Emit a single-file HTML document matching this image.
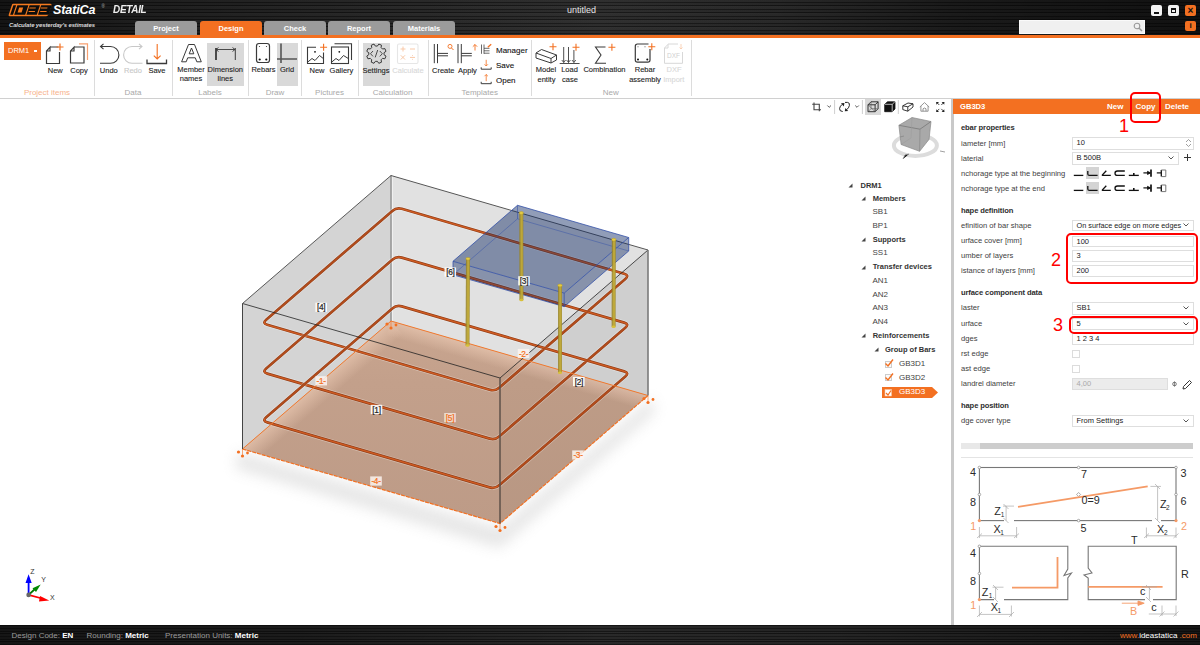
<!DOCTYPE html>
<html><head><meta charset="utf-8">
<style>
*{margin:0;padding:0;box-sizing:border-box}
html,body{width:1200px;height:645px;overflow:hidden;background:#fff;font-family:"Liberation Sans",sans-serif;}
.a{position:absolute}
#hdr{left:0;top:0;width:1200px;height:35px;background:#222;background-image:linear-gradient(90deg,rgba(0,0,0,0.55) 0%,rgba(0,0,0,0.3) 12%,rgba(0,0,0,0.05) 35%,rgba(255,255,255,0.02) 50%,rgba(0,0,0,0.08) 65%,rgba(0,0,0,0.4) 80%,rgba(0,0,0,0.6) 100%),repeating-linear-gradient(180deg,#2c2c2c 0px,#2b2b2b 2px,#181818 2px,#181818 3px,#292929 3px,#2a2a2a 5px,#151515 5px,#151515 6px,#2e2e2e 6px,#2d2d2d 7px);}
#oline{left:0;top:35px;width:1200px;height:3px;background:#f37021}
#tb{left:0;top:38px;width:1200px;height:61px;background:#fff;border-bottom:1px solid #d0d0d0}
.tab{top:21px;height:14px;width:62px;background:#9b9b9b;border-radius:3px 3px 0 0;color:#fff;font-weight:bold;font-size:7.5px;text-align:center;line-height:15px}
.tab.on{background:#f37021}
.sep{top:40px;width:1px;height:56px;background:#dcdcdc}
.glbl{top:87.5px;font-size:8px;color:#a9a9a9;text-align:center;line-height:10px}
.lbl{font-size:8px;color:#111;text-align:center;line-height:9px;white-space:nowrap;-webkit-text-stroke:0.1px currentColor}
.hl{background:#d9d9d9}
#foot{left:0;top:625px;width:1200px;height:20px;background:#222;background-image:linear-gradient(90deg,rgba(0,0,0,0.5) 0%,rgba(0,0,0,0.35) 25%,rgba(0,0,0,0.05) 50%,rgba(0,0,0,0.15) 70%,rgba(0,0,0,0.5) 100%),repeating-linear-gradient(180deg,#161616 0px,#161616 1px,#2c2c2c 1px,#2b2b2b 3px,#1a1a1a 3px,#1a1a1a 4px,#2a2a2a 4px,#2a2a2a 6px,#171717 6px,#171717 7px,#2e2e2e 7px,#2d2d2d 8px);}
.ft{top:631px;font-size:8px;color:#9a9a9a;line-height:10px;white-space:nowrap}
.ft b{color:#fff}
#panel{left:953px;top:99px;width:247px;height:525px;background:#fff}
.ph{font-size:7.6px;letter-spacing:-0.12px;color:#2e2e2e;font-weight:bold;line-height:10px;white-space:nowrap}
.pl{font-size:7.6px;color:#3e3e3e;line-height:10px;white-space:nowrap;left:961px}
.inp{left:1072px;width:122px;height:12px;border:1px solid #dedede;background:#fff;font-size:7.5px;color:#111;line-height:10px;padding-left:3.5px}
.tr{font-size:8px;color:#444;line-height:10px;white-space:nowrap}
.tr.b{font-weight:bold;color:#333;font-size:7.5px}
.red{border:2.3px solid #f00;border-radius:5px}
.rn{color:#f00;font-size:18px;line-height:18px}
</style></head><body>
<div id="hdr" class="a"></div>
<div id="oline" class="a"></div>
<!-- LOGO -->
<svg class="a" style="left:8px;top:3px" width="46" height="14" viewBox="0 0 46 14"><path d="M5.2 0.8 L42.3 0.8 Q44 0.8 43.5 2.3 L40.3 11.8 Q39.8 13.2 38.3 13.2 L1.7 13.2 Q0.2 13.2 0.7 11.7 L3.8 2.2 Q4.2 0.8 5.2 0.8Z" fill="#f47a1f"/><path d="M5.37 2.2 L8.17 2.2 L5.00 11.8 L2.20 11.8Z" fill="#0c0c0c"/><path d="M9.37 2.2 L20.37 2.2 L17.20 11.8 L6.20 11.8Z" fill="#0c0c0c"/><path d="M11.18 4.6 L15.18 4.6 L13.60 9.4 L9.60 9.4Z" fill="#f47a1f"/><path d="M21.57 2.2 L31.97 2.2 L28.80 11.8 L18.40 11.8Z" fill="#0c0c0c"/><path d="M21.53 4.4 L27.93 4.4 L27.60 5.4 L21.20 5.4Z M20.83 8.0 L27.13 8.0 L26.80 9.0 L20.50 9.0Z" fill="#f47a1f"/><path d="M33.17 2.2 L43.77 2.2 L40.60 11.8 L30.00 11.8Z" fill="#0c0c0c"/><path d="M32.93 4.4 L39.53 4.4 L39.20 5.4 L32.60 5.4Z M32.33 8.0 L38.73 8.0 L38.40 9.0 L32.00 9.0Z" fill="#f47a1f"/></svg>
<div class="a" style="left:53px;top:2px;font-size:12.5px;font-style:italic;font-weight:bold;color:#fff;line-height:16px;letter-spacing:-0.1px">StatiCa</div>
<div class="a" style="left:101.5px;top:3.5px;font-size:4.5px;color:#bbb;line-height:6px">&#174;</div>
<div class="a" style="left:113px;top:3px;font-size:11px;font-style:italic;font-weight:bold;color:#eee;line-height:13px;letter-spacing:-0.3px;transform:scaleX(0.9);transform-origin:0 0">DETAIL</div>
<div class="a" style="left:9px;top:20.5px;font-size:6px;font-style:italic;font-weight:bold;color:#d8d8d8;line-height:8px;letter-spacing:-0.15px">Calculate yesterday's estimates</div>
<div class="a" style="left:567px;top:5px;font-size:9px;color:#e8e8e8;line-height:11px">untitled</div>
<div class="a tab" style="left:135px">Project</div>
<div class="a tab on" style="left:200px">Design</div>
<div class="a tab" style="left:264px">Check</div>
<div class="a tab" style="left:328px">Report</div>
<div class="a tab" style="left:393px">Materials</div>
<div class="a" style="left:1151px;top:5px;width:11px;height:11px;background:#f2f2f2;border-radius:2px"><div class="a" style="left:3px;top:7px;width:5px;height:1.5px;background:#111"></div></div>
<div class="a" style="left:1168px;top:5px;width:11px;height:11px;background:#f2f2f2;border-radius:2px"><div class="a" style="left:3px;top:3px;width:5px;height:5px;border:1px solid #111;border-top-width:2px"></div></div>
<div class="a" style="left:1185px;top:5px;width:11px;height:11px;background:#f37021;border-radius:2px;color:#111;font-size:10px;line-height:11px;text-align:center;font-weight:bold">&#215;</div>
<div class="a" style="left:1185px;top:21px;width:11px;height:10px;background:#f37021;border-radius:2px;color:#111;font-size:8px;line-height:10px;text-align:center;font-weight:bold">i</div>
<div class="a" style="left:1019px;top:20px;width:126px;height:14px;background:#f0f0f0;border:1px solid #fafafa"></div>
<svg class="a" style="left:1133px;top:22px" width="10" height="10" viewBox="0 0 10 10"><circle cx="4" cy="4" r="2.8" fill="none" stroke="#999" stroke-width="1.1"/><path d="M6 6 L9 9" stroke="#999" stroke-width="1.5"/></svg>

<div id="tb" class="a"></div>
<div class="a hl" style="left:207px;top:42.5px;width:37px;height:43px"></div>
<div class="a hl" style="left:276.5px;top:42.5px;width:21px;height:43px"></div>
<div class="a hl" style="left:363px;top:43px;width:26.5px;height:42.5px"></div>
<div class="a sep" style="left:93.5px"></div>
<div class="a sep" style="left:171.5px"></div>
<div class="a sep" style="left:247.5px"></div>
<div class="a sep" style="left:301px"></div>
<div class="a sep" style="left:357.5px"></div>
<div class="a sep" style="left:427.5px"></div>
<div class="a sep" style="left:531px"></div>
<div class="a sep" style="left:690.5px"></div>
<div class="a" style="left:4px;top:42px;width:37px;height:18px;background:#f37021;color:#fff;font-size:7.5px;line-height:18px;padding-left:4px">DRM1</div>
<div class="a" style="left:34px;top:50px;width:3px;height:1.5px;background:#fff"></div>
<svg class="a" style="left:0;top:0" width="700" height="98" viewBox="0 0 700 98" fill="none" stroke-linecap="butt">
<path d="M50 47 L58.5 47 M59.5 52 L59.5 63.5 L46.5 63.5 L46.5 51 L50 47.2 L50 51 L46.5 51" stroke="#3a3a3a" stroke-width="1.2"/>
<path d="M60 43.5 V50.5 M56.5 47 H63.5" stroke="#f37021" stroke-width="1.2"/>
<path d="M74 47 L84 47 L84 63 L70.5 63 L70.5 51 L74 47.2 L74 51 L70.5 51" stroke="#3a3a3a" stroke-width="1.2"/>
<path d="M79 43.8 L87.5 43.8 L87.5 60" stroke="#f7a070" stroke-width="1.2"/>
<path d="M100.5 46.5 L110.5 46.5 A8.4 8.4 0 0 1 110.5 63.3 L100 63.3 M103.5 43.8 L100.5 46.5 L103.5 49.2" stroke="#3a3a3a" stroke-width="1.1"/>
<path d="M142 46.5 L132 46.5 A8.4 8.4 0 0 0 132 63.3 L142.5 63.3 M139 43.8 L142 46.5 L139 49.2" stroke="#c8c8c8" stroke-width="1.1"/>
<path d="M157.2 44 V59 M153.8 55.6 L157.2 59 L160.6 55.6" stroke="#f37021" stroke-width="1.1"/>
<path d="M147 59.5 V63.5 H166.5 V59.5" stroke="#3a3a3a" stroke-width="1.3"/>
<path d="M188.5 44.5 L194.5 44.5 L201.3 61.8 L196.8 61.8 L195.3 57.8 L187.7 57.8 L186.2 61.8 L181.6 61.8Z M189.2 53.8 L193.8 53.8 L191.5 48Z" stroke="#3a3a3a" stroke-width="1"/>
<path d="M216 49.5 H235 M218.5 47.5 L216 49.5 L218.5 51.5 M232.5 47.5 L235 49.5 L232.5 51.5" stroke="#3a3a3a" stroke-width="0.9"/>
<path d="M216 48 V60" stroke="#3a3a3a" stroke-width="1.8"/><path d="M235.3 48 V60" stroke="#3a3a3a" stroke-width="1"/>
<rect x="256.5" y="43.5" width="13" height="19" rx="2.5" stroke="#3a3a3a" stroke-width="1.2"/>
<circle cx="259.5" cy="46.5" r="0.6" fill="#3a3a3a" stroke="none"/><circle cx="266.5" cy="46.5" r="0.6" fill="#3a3a3a" stroke="none"/><circle cx="259.7" cy="59.5" r="1.1" fill="#111" stroke="none"/><circle cx="266.3" cy="59.5" r="1.1" fill="#111" stroke="none"/>
<path d="M281 43.5 V63 M277 59 H297" stroke="#555" stroke-width="1.6"/>
<path d="M316 47.2 H307.5 V63.5 H323.5 V52.5" stroke="#3a3a3a" stroke-width="1.1"/>
<path d="M307.8 62 L312 58.5 L315 60.5 L319.5 55.5 L323.3 58.5" stroke="#3a3a3a" stroke-width="1"/><circle cx="315" cy="51.8" r="0.9" fill="#111" stroke="none"/>
<path d="M323.6 43.7 V50.7 M320.1 47.2 H327.1" stroke="#f37021" stroke-width="1.1"/>
<rect x="331.5" y="47" width="17" height="16.5" stroke="#3a3a3a" stroke-width="1.1"/><path d="M334.5 43.8 H351.5 V60" stroke="#3a3a3a" stroke-width="1.1"/>
<path d="M331.8 62 L336 58.5 L339 60.5 L343.5 55.5 L348.3 58.5" stroke="#3a3a3a" stroke-width="1"/><circle cx="339.3" cy="51.8" r="0.9" fill="#111" stroke="none"/>
<path d="M384.03 54.71 L386.01 56.10 L384.89 58.80 L382.51 58.39 L381.09 59.81 L381.50 62.19 L378.80 63.31 L377.41 61.33 L375.39 61.33 L374.00 63.31 L371.30 62.19 L371.71 59.81 L370.29 58.39 L367.91 58.80 L366.79 56.10 L368.77 54.71 L368.77 52.69 L366.79 51.30 L367.91 48.60 L370.29 49.01 L371.71 47.59 L371.30 45.21 L374.00 44.09 L375.39 46.07 L377.41 46.07 L378.80 44.09 L381.50 45.21 L381.09 47.59 L382.51 49.01 L384.89 48.60 L386.01 51.30 L384.03 52.69Z" stroke="#3a3a3a" stroke-width="1" stroke-linejoin="round"/>
<path d="M373 51 L370.5 53.7 L373 56.4 M379.8 51 L382.3 53.7 L379.8 56.4 M377.7 50 L375.2 57.4" stroke="#3a3a3a" stroke-width="0.9"/>
<rect x="397.5" y="44" width="20.5" height="19.5" rx="1.5" stroke="#e6e6e6" stroke-width="1.1"/>
<path d="M403 46.5 V51.5 M400.5 49 H405.5 M410 49 H415 M400.8 55.3 L405 59.5 M405 55.3 L400.8 59.5 M410 57.4 H415" stroke="#f9c9a8" stroke-width="1"/><circle cx="412.5" cy="55.5" r="0.5" fill="#f9c9a8"/><circle cx="412.5" cy="59.3" r="0.5" fill="#f9c9a8"/>
<path d="M434.3 44 V63.2 M437.5 44 V63.2 M437.5 53.4 H448 M437.5 55.8 H448" stroke="#3a3a3a" stroke-width="1"/>
<circle cx="450" cy="46.4" r="2" stroke="#f37021" stroke-width="0.9"/><path d="M451.5 48 L453.5 50" stroke="#f37021" stroke-width="1"/>
<path d="M458 44 V63.2 M461.3 44 V63.2 M461.3 53.4 H471.8 M461.3 55.8 H471.8" stroke="#3a3a3a" stroke-width="1"/>
<path d="M475 50.5 V44.5 M472.8 46.7 L475 44.5 L477.2 46.7" stroke="#f37021" stroke-width="0.9"/>
<path d="M481.5 44.5 V53.8 M484 44.5 V53.8 M484 48.3 H489.5 M484 50.8 H489.5 M484 53.2 H489.5" stroke="#3a3a3a" stroke-width="0.75"/><path d="M487.8 47.3 L491.2 44.2" stroke="#f37021" stroke-width="1.3"/>
<path d="M486.2 59.8 V66 M484.5 64.3 L486.2 66 L487.9 64.3" stroke="#f37021" stroke-width="0.8"/><path d="M481.2 67.3 V69.2 H491.2 V67.3" stroke="#3a3a3a" stroke-width="1"/>
<path d="M486.2 81.2 V74.5 M484.5 76.2 L486.2 74.5 L487.9 76.2" stroke="#f37021" stroke-width="0.8"/><path d="M481.2 81.8 V83.7 H491.2 V81.8" stroke="#3a3a3a" stroke-width="1"/>
<path d="M536 53 L541.5 49.5 L556.5 55 L551 58.5 Z M536 53 V58 L551 63 V58.5 M556.5 55 V60 L551 63" stroke="#3a3a3a" stroke-width="1"/>
<path d="M553 43.3 V50.3 M549.5 46.8 H556.5" stroke="#f37021" stroke-width="1.1"/>
<path d="M563.7 47 V62.5 M568.5 47 V62.5 M573.9 50 V62.5 M559.7 63.5 H579.6" stroke="#3a3a3a" stroke-width="0.9"/>
<path d="M561.8 60 L563.7 62.5 L565.6 60 M566.6 60 L568.5 62.5 L570.4 60 M572 60 L573.9 62.5 L575.8 60" stroke="#3a3a3a" stroke-width="0.8"/>
<path d="M576 43.7 V50.7 M572.5 47.2 H579.5" stroke="#f37021" stroke-width="1.1"/>
<path d="M605.5 47 H595.5 L601 55 L595.5 63.3 H606" stroke="#3a3a3a" stroke-width="1.1"/>
<path d="M611.9 43.7 V50.7 M608.4 47.2 H615.4" stroke="#f37021" stroke-width="1.1"/>
<path d="M648.5 44 H637.5 Q635.3 44 635.3 46.2 V60 Q635.3 62.2 637.5 62.2 H647.8 Q650 62.2 650 60 V49" stroke="#3a3a3a" stroke-width="1.2"/>
<circle cx="638" cy="59.5" r="1" fill="#111" stroke="none"/><circle cx="647.3" cy="59.5" r="1" fill="#111" stroke="none"/><circle cx="638" cy="46.7" r="0.5" fill="#3a3a3a" stroke="none"/><circle cx="645" cy="46.7" r="0.5" fill="#3a3a3a" stroke="none"/>
<path d="M651.8 43.3 V50.3 M648.3 46.8 H655.3" stroke="#f37021" stroke-width="1.1"/>
<path d="M668 44 H678 M682.5 52 V63.3 H664.5 V48 L668 44.3 V48 H664.5" stroke="#d8d8d8" stroke-width="1"/>
<path d="M681 44 V49 M679.5 47.5 L681 49 L682.5 47.5" stroke="#f9c9a8" stroke-width="0.8"/>
<text x="673.5" y="57.5" font-size="6.5" fill="#d0d0d0" stroke="none" text-anchor="middle" font-family="Liberation Sans">DXF</text>
</svg>
<div class="a lbl" style="left:25.299999999999997px;top:65.5px;width:60px;color:#222;font-size:7.5px">New</div>
<div class="a lbl" style="left:49.0px;top:65.5px;width:60px;color:#222;font-size:7.5px">Copy</div>
<div class="a lbl" style="left:78.8px;top:65.5px;width:60px;color:#222;font-size:7.5px">Undo</div>
<div class="a lbl" style="left:103.0px;top:65.5px;width:60px;color:#c8c8c8;font-size:7.5px">Redo</div>
<div class="a lbl" style="left:127.0px;top:65.5px;width:60px;color:#222;font-size:7.5px">Save</div>
<div class="a lbl" style="left:161.0px;top:64.5px;width:60px;color:#222;font-size:7.5px">Member</div>
<div class="a lbl" style="left:161.0px;top:73.8px;width:60px;color:#222;font-size:7.5px">names</div>
<div class="a lbl" style="left:195.3px;top:64.5px;width:60px;color:#222;font-size:7.5px">Dimension</div>
<div class="a lbl" style="left:195.3px;top:73.8px;width:60px;color:#222;font-size:7.5px">lines</div>
<div class="a lbl" style="left:233.5px;top:64.5px;width:60px;color:#222;font-size:7.5px">Rebars</div>
<div class="a lbl" style="left:257.0px;top:64.5px;width:60px;color:#222;font-size:7.5px">Grid</div>
<div class="a lbl" style="left:287.0px;top:65.5px;width:60px;color:#222;font-size:7.5px">New</div>
<div class="a lbl" style="left:311.5px;top:65.5px;width:60px;color:#222;font-size:7.5px">Gallery</div>
<div class="a lbl" style="left:346.0px;top:65.5px;width:60px;color:#222;font-size:7.5px">Settings</div>
<div class="a lbl" style="left:378.0px;top:65.5px;width:60px;color:#d8d8d8;font-size:7.5px">Calculate</div>
<div class="a lbl" style="left:413.3px;top:65.5px;width:60px;color:#222;font-size:7.5px">Create</div>
<div class="a lbl" style="left:437.5px;top:65.5px;width:60px;color:#222;font-size:7.5px">Apply</div>
<div class="a lbl" style="left:496px;top:45.5px;text-align:left">Manager</div>
<div class="a lbl" style="left:496px;top:60.5px;text-align:left">Save</div>
<div class="a lbl" style="left:496px;top:75.5px;text-align:left">Open</div>
<div class="a lbl" style="left:516.0px;top:64.9px;width:60px;color:#222;font-size:7.5px">Model</div>
<div class="a lbl" style="left:516.5px;top:74.5px;width:60px;color:#222;font-size:7.5px">entity</div>
<div class="a lbl" style="left:539.5px;top:65.3px;width:60px;color:#222;font-size:7.5px">Load</div>
<div class="a lbl" style="left:540.0px;top:74.9px;width:60px;color:#222;font-size:7.5px">case</div>
<div class="a lbl" style="left:574.5px;top:65.3px;width:60px;color:#222;font-size:7.5px">Combination</div>
<div class="a lbl" style="left:615.0px;top:64.6px;width:60px;color:#222;font-size:7.5px">Rebar</div>
<div class="a lbl" style="left:615.0px;top:74.5px;width:60px;color:#222;font-size:7.5px">assembly</div>
<div class="a lbl" style="left:644.0px;top:65.0px;width:60px;color:#d8d8d8;font-size:7.5px">DXF</div>
<div class="a lbl" style="left:644.0px;top:74.5px;width:60px;color:#d8d8d8;font-size:7.5px">import</div>
<div class="a glbl" style="left:7px;width:80px;color:#f7b28c">Project items</div>
<div class="a glbl" style="left:93px;width:80px;color:#a9a9a9">Data</div>
<div class="a glbl" style="left:170px;width:80px;color:#a9a9a9">Labels</div>
<div class="a glbl" style="left:235px;width:80px;color:#a9a9a9">Draw</div>
<div class="a glbl" style="left:289.5px;width:80px;color:#a9a9a9">Pictures</div>
<div class="a glbl" style="left:352.6px;width:80px;color:#a9a9a9">Calculation</div>
<div class="a glbl" style="left:439.7px;width:80px;color:#a9a9a9">Templates</div>
<div class="a glbl" style="left:570.7px;width:80px;color:#a9a9a9">New</div>

<!--M3D-->
<svg class="a" style="left:0;top:99px" width="950" height="525" viewBox="0 99 950 525">
<defs><filter id="blur" x="-20%" y="-20%" width="140%" height="140%"><feGaussianBlur stdDeviation="7"/></filter>
<linearGradient id="sal" x1="0" y1="321" x2="0" y2="523.5" gradientUnits="userSpaceOnUse"><stop offset="0" stop-color="#c9a690"/><stop offset="0.3" stop-color="#c3a08b"/><stop offset="1" stop-color="#bd9b87"/></linearGradient>
</defs>
<polygon points="238.0,452.0 500.0,528.0 652.0,398.0 655.0,412.0 500.0,548.0 235.0,468.0" fill="#c8c8c8" opacity="0.45" filter="url(#blur)"/>
<polygon points="391.0,175.5 648.0,250.0 648.0,395.5 500.0,523.5 242.5,449.0 242.5,303.5" fill="#d4d4d4"/>
<polygon points="391.0,175.5 648.0,250.0 522.0,359.0 391.0,321.0" fill="#e1e1e1"/>
<polygon points="391.0,321.0 648.0,395.5 500.0,523.5 242.5,449.0" fill="url(#sal)"/>
<defs><linearGradient id="bandR" gradientUnits="userSpaceOnUse" x1="0" y1="0" x2="-4.3" y2="14.9"><stop offset="0" stop-color="#e2c0aa" stop-opacity="0.9"/><stop offset="1" stop-color="#e2c0aa" stop-opacity="0"/></linearGradient><linearGradient id="bandL" gradientUnits="userSpaceOnUse" x1="0" y1="0" x2="11.8" y2="13.7"><stop offset="0" stop-color="#e2c0aa" stop-opacity="0.85"/><stop offset="1" stop-color="#e2c0aa" stop-opacity="0"/></linearGradient></defs>
<clipPath id="salclip"><polygon points="391.0,321.0 648.0,395.5 500.0,523.5 242.5,449.0"/></clipPath><g clip-path="url(#salclip)"><g transform="translate(391,321.0)"><polygon points="0.0,0.0 257.0,74.5 252.7,89.4 -4.3,14.9" fill="url(#bandR)"/></g>
<g transform="translate(391,321.0)"><polygon points="0.0,0.0 -148.5,128.0 -136.7,141.6 11.8,13.6" fill="url(#bandL)"/></g>
</g><polygon points="500.0,378.0 648.0,250.0 648.0,395.5 500.0,523.5" fill="#000" opacity="0.025"/>
<line x1="391" y1="175.5" x2="391" y2="321" stroke="#8a8a8a" stroke-width="1.3"/>
<line x1="392.5" y1="176" x2="392.5" y2="321" stroke="#f4f4f4" stroke-width="0.8"/>
<path d="M392.3 210.9 Q396.5 207.3 401.8 208.8 L624.2 273.8 Q629.5 275.3 625.3 278.9 L499.2 387.7 Q495.0 391.3 489.7 389.8 L267.3 324.8 Q262.0 323.3 266.2 319.7 Z" fill="none" stroke="#fff" stroke-width="4.2" stroke-linejoin="round" opacity="0.35"/>
<path d="M392.3 210.9 Q396.5 207.3 401.8 208.8 L624.2 273.8 Q629.5 275.3 625.3 278.9 L499.2 387.7 Q495.0 391.3 489.7 389.8 L267.3 324.8 Q262.0 323.3 266.2 319.7 Z" fill="none" stroke="#93401a" stroke-width="2.7" stroke-linejoin="round"/>
<path d="M392.3 210.9 Q396.5 207.3 401.8 208.8 L624.2 273.8 Q629.5 275.3 625.3 278.9 L499.2 387.7 Q495.0 391.3 489.7 389.8 L267.3 324.8 Q262.0 323.3 266.2 319.7 Z" fill="none" stroke="#d25c22" stroke-width="1.3" stroke-linejoin="round"/>
<path d="M392.3 259.7 Q396.5 256.1 401.8 257.6 L624.2 322.6 Q629.5 324.1 625.3 327.7 L499.2 436.5 Q495.0 440.1 489.7 438.6 L267.3 373.6 Q262.0 372.1 266.2 368.5 Z" fill="none" stroke="#fff" stroke-width="4.2" stroke-linejoin="round" opacity="0.35"/>
<path d="M392.3 259.7 Q396.5 256.1 401.8 257.6 L624.2 322.6 Q629.5 324.1 625.3 327.7 L499.2 436.5 Q495.0 440.1 489.7 438.6 L267.3 373.6 Q262.0 372.1 266.2 368.5 Z" fill="none" stroke="#93401a" stroke-width="2.7" stroke-linejoin="round"/>
<path d="M392.3 259.7 Q396.5 256.1 401.8 257.6 L624.2 322.6 Q629.5 324.1 625.3 327.7 L499.2 436.5 Q495.0 440.1 489.7 438.6 L267.3 373.6 Q262.0 372.1 266.2 368.5 Z" fill="none" stroke="#d25c22" stroke-width="1.3" stroke-linejoin="round"/>
<path d="M392.3 308.5 Q396.5 304.9 401.8 306.4 L624.2 371.4 Q629.5 372.9 625.3 376.5 L499.2 485.3 Q495.0 488.9 489.7 487.4 L267.3 422.4 Q262.0 420.9 266.2 417.3 Z" fill="none" stroke="#fff" stroke-width="4.2" stroke-linejoin="round" opacity="0.35"/>
<path d="M392.3 308.5 Q396.5 304.9 401.8 306.4 L624.2 371.4 Q629.5 372.9 625.3 376.5 L499.2 485.3 Q495.0 488.9 489.7 487.4 L267.3 422.4 Q262.0 420.9 266.2 417.3 Z" fill="none" stroke="#93401a" stroke-width="2.7" stroke-linejoin="round"/>
<path d="M392.3 308.5 Q396.5 304.9 401.8 306.4 L624.2 371.4 Q629.5 372.9 625.3 376.5 L499.2 485.3 Q495.0 488.9 489.7 487.4 L267.3 422.4 Q262.0 420.9 266.2 417.3 Z" fill="none" stroke="#d25c22" stroke-width="1.3" stroke-linejoin="round"/>
<line x1="393.5" y1="209.9" x2="265.0" y2="320.7" stroke="#ad4a1c" stroke-width="1.3"/>
<line x1="626.5" y1="277.9" x2="498.0" y2="388.7" stroke="#ad4a1c" stroke-width="1.3"/>
<line x1="393.5" y1="258.7" x2="265.0" y2="369.5" stroke="#ad4a1c" stroke-width="1.3"/>
<line x1="626.5" y1="326.7" x2="498.0" y2="437.5" stroke="#ad4a1c" stroke-width="1.3"/>
<line x1="393.5" y1="307.5" x2="265.0" y2="418.3" stroke="#ad4a1c" stroke-width="1.3"/>
<line x1="626.5" y1="375.5" x2="498.0" y2="486.3" stroke="#ad4a1c" stroke-width="1.3"/>
<polyline points="242.5,449.0 391.0,321.0 648.0,395.5" fill="none" stroke="#f07a30" stroke-width="1"/>
<polyline points="242.5,449.0 500.0,523.5 648.0,395.5" fill="none" stroke="#f37021" stroke-width="1.2" stroke-dasharray="4 1"/>
<polyline points="242.5,303.5 391.0,175.5 648.0,250.0" fill="none" stroke="#333" stroke-width="0.8"/>
<polyline points="242.5,303.5 500.0,378.0 648.0,250.0" fill="none" stroke="#222" stroke-width="0.8"/>
<line x1="242.5" y1="303.5" x2="242.5" y2="449" stroke="#444" stroke-width="1"/>
<line x1="648" y1="250" x2="648" y2="395.5" stroke="#7a7a7a" stroke-width="1.6"/>
<line x1="500" y1="378" x2="500" y2="523.5" stroke="#5e5048" stroke-width="1.5"/>
<circle cx="238.5" cy="452.0" r="1.6" fill="#f37021"/><circle cx="242.5" cy="456.0" r="1.6" fill="#f37021"/><circle cx="247.5" cy="453.0" r="1.4" fill="#f37021"/>
<line x1="242.5" y1="449.0" x2="242.5" y2="456.0" stroke="#f37021" stroke-width="0.6"/>
<circle cx="496" cy="526.5" r="1.6" fill="#f37021"/><circle cx="500" cy="530.5" r="1.6" fill="#f37021"/><circle cx="505" cy="527.5" r="1.4" fill="#f37021"/>
<line x1="500" y1="523.5" x2="500" y2="530.5" stroke="#f37021" stroke-width="0.6"/>
<circle cx="644" cy="398.5" r="1.6" fill="#f37021"/><circle cx="648" cy="402.5" r="1.6" fill="#f37021"/><circle cx="653" cy="399.5" r="1.4" fill="#f37021"/>
<line x1="648" y1="395.5" x2="648" y2="402.5" stroke="#f37021" stroke-width="0.6"/>
<circle cx="387" cy="324.0" r="1.6" fill="#f37021"/><circle cx="391" cy="328.0" r="1.6" fill="#f37021"/><circle cx="396" cy="325.0" r="1.4" fill="#f37021"/>
<line x1="391" y1="321.0" x2="391" y2="328.0" stroke="#f37021" stroke-width="0.6"/>
<polygon points="517.5,205.3 628.7,237.5 564.2,293.1 453.0,261.3" fill="#0c2662" opacity="0.45"/>
<polygon points="453.0,261.3 564.2,293.1 564.2,306.6 453.0,274.8" fill="#0c2662" opacity="0.42"/>
<polygon points="564.2,293.1 628.7,237.5 628.7,251.0 564.2,306.6" fill="#0c2662" opacity="0.42"/>
<clipPath id="plclip"><polygon points="517.5,205.3 628.7,237.5 628.7,251.0 564.2,306.6 453.0,274.8 453.0,261.3"/></clipPath>
<g clip-path="url(#plclip)" opacity="0.22"><path d="M392.3 210.9 Q396.5 207.3 401.8 208.8 L624.2 273.8 Q629.5 275.3 625.3 278.9 L499.2 387.7 Q495.0 391.3 489.7 389.8 L267.3 324.8 Q262.0 323.3 266.2 319.7 Z" fill="none" stroke="#fff" stroke-width="4.2" stroke-linejoin="round" opacity="0.35"/>
<path d="M392.3 210.9 Q396.5 207.3 401.8 208.8 L624.2 273.8 Q629.5 275.3 625.3 278.9 L499.2 387.7 Q495.0 391.3 489.7 389.8 L267.3 324.8 Q262.0 323.3 266.2 319.7 Z" fill="none" stroke="#93401a" stroke-width="2.7" stroke-linejoin="round"/>
<path d="M392.3 210.9 Q396.5 207.3 401.8 208.8 L624.2 273.8 Q629.5 275.3 625.3 278.9 L499.2 387.7 Q495.0 391.3 489.7 389.8 L267.3 324.8 Q262.0 323.3 266.2 319.7 Z" fill="none" stroke="#d25c22" stroke-width="1.3" stroke-linejoin="round"/>
<path d="M392.3 259.7 Q396.5 256.1 401.8 257.6 L624.2 322.6 Q629.5 324.1 625.3 327.7 L499.2 436.5 Q495.0 440.1 489.7 438.6 L267.3 373.6 Q262.0 372.1 266.2 368.5 Z" fill="none" stroke="#fff" stroke-width="4.2" stroke-linejoin="round" opacity="0.35"/>
<path d="M392.3 259.7 Q396.5 256.1 401.8 257.6 L624.2 322.6 Q629.5 324.1 625.3 327.7 L499.2 436.5 Q495.0 440.1 489.7 438.6 L267.3 373.6 Q262.0 372.1 266.2 368.5 Z" fill="none" stroke="#93401a" stroke-width="2.7" stroke-linejoin="round"/>
<path d="M392.3 259.7 Q396.5 256.1 401.8 257.6 L624.2 322.6 Q629.5 324.1 625.3 327.7 L499.2 436.5 Q495.0 440.1 489.7 438.6 L267.3 373.6 Q262.0 372.1 266.2 368.5 Z" fill="none" stroke="#d25c22" stroke-width="1.3" stroke-linejoin="round"/>
<path d="M392.3 308.5 Q396.5 304.9 401.8 306.4 L624.2 371.4 Q629.5 372.9 625.3 376.5 L499.2 485.3 Q495.0 488.9 489.7 487.4 L267.3 422.4 Q262.0 420.9 266.2 417.3 Z" fill="none" stroke="#fff" stroke-width="4.2" stroke-linejoin="round" opacity="0.35"/>
<path d="M392.3 308.5 Q396.5 304.9 401.8 306.4 L624.2 371.4 Q629.5 372.9 625.3 376.5 L499.2 485.3 Q495.0 488.9 489.7 487.4 L267.3 422.4 Q262.0 420.9 266.2 417.3 Z" fill="none" stroke="#93401a" stroke-width="2.7" stroke-linejoin="round"/>
<path d="M392.3 308.5 Q396.5 304.9 401.8 306.4 L624.2 371.4 Q629.5 372.9 625.3 376.5 L499.2 485.3 Q495.0 488.9 489.7 487.4 L267.3 422.4 Q262.0 420.9 266.2 417.3 Z" fill="none" stroke="#d25c22" stroke-width="1.3" stroke-linejoin="round"/>
<line x1="393.5" y1="209.9" x2="265.0" y2="320.7" stroke="#ad4a1c" stroke-width="1.3"/>
<line x1="626.5" y1="277.9" x2="498.0" y2="388.7" stroke="#ad4a1c" stroke-width="1.3"/>
<line x1="393.5" y1="258.7" x2="265.0" y2="369.5" stroke="#ad4a1c" stroke-width="1.3"/>
<line x1="626.5" y1="326.7" x2="498.0" y2="437.5" stroke="#ad4a1c" stroke-width="1.3"/>
<line x1="393.5" y1="307.5" x2="265.0" y2="418.3" stroke="#ad4a1c" stroke-width="1.3"/>
<line x1="626.5" y1="375.5" x2="498.0" y2="486.3" stroke="#ad4a1c" stroke-width="1.3"/>
</g>
<polygon points="517.5,205.3 628.7,237.5 564.2,293.1 453.0,261.3" fill="none" stroke="#3552a8" stroke-width="0.8"/>
<polyline points="453.0,261.3 453.0,274.8 564.2,306.6 628.7,251.0 628.7,237.5" fill="none" stroke="#3552a8" stroke-width="0.8"/>
<line x1="564.2" y1="293.1" x2="564.2" y2="306.6" stroke="#3552a8" stroke-width="0.8"/>
<polyline points="453.0,274.8 517.5,218.8 628.7,251.0" fill="none" stroke="#3552a8" stroke-width="0.6" opacity="0.8"/>
<line x1="517.5" y1="205.3" x2="517.5" y2="218.8" stroke="#3552a8" stroke-width="0.6"/>
<line x1="521.3" y1="213" x2="521.4" y2="300" stroke="#9a8626" stroke-width="4.0" opacity="0.85"/>
<line x1="521.5999999999999" y1="213" x2="521.6999999999999" y2="300" stroke="#c4ad3a" stroke-width="2.2" opacity="0.85"/>
<ellipse cx="521.3" cy="213" rx="2.2" ry="1.4" fill="#e6cc44" stroke="#b09a28" stroke-width="0.5"/>
<ellipse cx="521.4" cy="300" rx="2.1" ry="1.3" fill="#d8c03a"/>
<line x1="468" y1="258.8" x2="467.5" y2="345.5" stroke="#9a8626" stroke-width="4.0" opacity="0.85"/>
<line x1="468.3" y1="258.8" x2="467.8" y2="345.5" stroke="#c4ad3a" stroke-width="2.2" opacity="0.85"/>
<ellipse cx="468" cy="258.8" rx="2.2" ry="1.4" fill="#e6cc44" stroke="#b09a28" stroke-width="0.5"/>
<ellipse cx="467.5" cy="345.5" rx="2.1" ry="1.3" fill="#d8c03a"/>
<line x1="613.8" y1="239.7" x2="613.6" y2="326.7" stroke="#9a8626" stroke-width="4.0" opacity="0.85"/>
<line x1="614.0999999999999" y1="239.7" x2="613.9" y2="326.7" stroke="#c4ad3a" stroke-width="2.2" opacity="0.85"/>
<ellipse cx="613.8" cy="239.7" rx="2.2" ry="1.4" fill="#e6cc44" stroke="#b09a28" stroke-width="0.5"/>
<ellipse cx="613.6" cy="326.7" rx="2.1" ry="1.3" fill="#d8c03a"/>
<line x1="560" y1="285.5" x2="560" y2="372.7" stroke="#9a8626" stroke-width="4.0" opacity="0.85"/>
<line x1="560.3" y1="285.5" x2="560.3" y2="372.7" stroke="#c4ad3a" stroke-width="2.2" opacity="0.85"/>
<ellipse cx="560" cy="285.5" rx="2.2" ry="1.4" fill="#e6cc44" stroke="#b09a28" stroke-width="0.5"/>
<ellipse cx="560" cy="372.7" rx="2.1" ry="1.3" fill="#d8c03a"/>
<rect x="315.4" y="302.7" width="11.600000000000001" height="9.2" fill="#fff" opacity="0.9"/><text x="321.2" y="310.3" font-size="8.3" fill="#222" stroke="#222" stroke-width="0.2" text-anchor="middle" font-family="Liberation Sans" letter-spacing="-0.3">[4]</text>
<rect x="370.7" y="404.9" width="11.600000000000001" height="9.2" fill="#fff" opacity="0.9"/><text x="376.5" y="412.5" font-size="8.3" fill="#222" stroke="#222" stroke-width="0.2" text-anchor="middle" font-family="Liberation Sans" letter-spacing="-0.3">[1]</text>
<rect x="573.0" y="376.9" width="11.600000000000001" height="9.2" fill="#fff" opacity="0.9"/><text x="578.8" y="384.5" font-size="8.3" fill="#222" stroke="#222" stroke-width="0.2" text-anchor="middle" font-family="Liberation Sans" letter-spacing="-0.3">[2]</text>
<rect x="444.5" y="267.4" width="11.600000000000001" height="9.2" fill="#fff" opacity="0.9"/><text x="450.3" y="275" font-size="8.3" fill="#222" stroke="#222" stroke-width="0.2" text-anchor="middle" font-family="Liberation Sans" letter-spacing="-0.3">[6]</text>
<rect x="518.2" y="276.2" width="11.600000000000001" height="9.2" fill="#fff" opacity="0.9"/><text x="524" y="283.8" font-size="8.3" fill="#222" stroke="#222" stroke-width="0.2" text-anchor="middle" font-family="Liberation Sans" letter-spacing="-0.3">[3]</text>
<rect x="444.2" y="413.0" width="11.600000000000001" height="9.2" fill="#f6e8e0" opacity="0.8"/><text x="450" y="420.6" font-size="8.3" fill="#f37021" stroke="#f37021" stroke-width="0.2" text-anchor="middle" font-family="Liberation Sans" letter-spacing="-0.3">[5]</text>
<rect x="315.4" y="376.2" width="11.600000000000001" height="9.2" fill="#fbf3ee" opacity="0.85"/><text x="321.2" y="383.8" font-size="8.3" fill="#f37021" stroke="#f37021" stroke-width="0.2" text-anchor="middle" font-family="Liberation Sans" letter-spacing="-0.3">-1-</text>
<rect x="517.7" y="348.9" width="11.600000000000001" height="9.2" fill="#fbf3ee" opacity="0.85"/><text x="523.5" y="356.5" font-size="8.3" fill="#f37021" stroke="#f37021" stroke-width="0.2" text-anchor="middle" font-family="Liberation Sans" letter-spacing="-0.3">-2-</text>
<rect x="572.2" y="450.4" width="11.600000000000001" height="9.2" fill="#fbf3ee" opacity="0.85"/><text x="578" y="458" font-size="8.3" fill="#f37021" stroke="#f37021" stroke-width="0.2" text-anchor="middle" font-family="Liberation Sans" letter-spacing="-0.3">-3-</text>
<rect x="370.2" y="476.4" width="11.600000000000001" height="9.2" fill="#fbf3ee" opacity="0.85"/><text x="376" y="484" font-size="8.3" fill="#f37021" stroke="#f37021" stroke-width="0.2" text-anchor="middle" font-family="Liberation Sans" letter-spacing="-0.3">-4-</text>
</svg>
<!--/M3D-->
<div id="foot" class="a"></div>
<!--VP-->
<svg class="a" style="left:848.0px;top:183.1px" width="5" height="5"><path d="M4.5 0.5 L4.5 4.5 L0.5 4.5Z" fill="#444"/></svg>
<div class="a tr b" style="left:860.5px;top:180.6px;">DRM1</div>
<svg class="a" style="left:860.5px;top:196.1px" width="5" height="5"><path d="M4.5 0.5 L4.5 4.5 L0.5 4.5Z" fill="#444"/></svg>
<div class="a tr b" style="left:872.7px;top:193.6px;">Members</div>
<div class="a tr" style="left:872.5px;top:207px;">SB1</div>
<div class="a tr" style="left:872.5px;top:220.6px;">BP1</div>
<svg class="a" style="left:860.5px;top:237.1px" width="5" height="5"><path d="M4.5 0.5 L4.5 4.5 L0.5 4.5Z" fill="#444"/></svg>
<div class="a tr b" style="left:872.7px;top:234.6px;">Supports</div>
<div class="a tr" style="left:872.5px;top:248.2px;">SS1</div>
<svg class="a" style="left:860.5px;top:264.5px" width="5" height="5"><path d="M4.5 0.5 L4.5 4.5 L0.5 4.5Z" fill="#444"/></svg>
<div class="a tr b" style="left:872.7px;top:262px;">Transfer devices</div>
<div class="a tr" style="left:872.5px;top:275.7px;">AN1</div>
<div class="a tr" style="left:872.5px;top:289.5px;">AN2</div>
<div class="a tr" style="left:872.5px;top:303.2px;">AN3</div>
<div class="a tr" style="left:872.5px;top:316.8px;">AN4</div>
<svg class="a" style="left:860.5px;top:333.2px" width="5" height="5"><path d="M4.5 0.5 L4.5 4.5 L0.5 4.5Z" fill="#444"/></svg>
<div class="a tr b" style="left:872.7px;top:330.7px;">Reinforcements</div>
<svg class="a" style="left:873.5px;top:347.0px" width="5" height="5"><path d="M4.5 0.5 L4.5 4.5 L0.5 4.5Z" fill="#444"/></svg>
<div class="a tr b" style="left:885px;top:344.5px;">Group of Bars</div>
<div class="a" style="left:884.5px;top:360.5px;width:7px;height:7px;border:1px solid #ccc;background:#fafafa"></div>
<svg class="a" style="left:884px;top:358px" width="10" height="10"><path d="M1.5 5.5 L4 8 L9 1.5" fill="none" stroke="#f37021" stroke-width="1.4"/></svg>
<div class="a tr" style="left:899px;top:359px;">GB3D1</div>
<div class="a" style="left:884.5px;top:374.2px;width:7px;height:7px;border:1px solid #ccc;background:#fafafa"></div>
<svg class="a" style="left:884px;top:371.7px" width="10" height="10"><path d="M1.5 5.5 L4 8 L9 1.5" fill="none" stroke="#f37021" stroke-width="1.4"/></svg>
<div class="a tr" style="left:899px;top:372.7px;">GB3D2</div>
<svg class="a" style="left:882px;top:386.5px" width="57" height="12"><path d="M0 0 H50 L56 5.5 L50 11 H0Z" fill="#f37021"/><rect x="3" y="2.5" width="6.5" height="6.5" fill="#fff" stroke="#f9c4a0" stroke-width="0.6"/><path d="M4 6 L6 8 L9 3.5" fill="none" stroke="#f37021" stroke-width="1.2"/></svg>
<div class="a tr" style="left:899px;top:387px;color:#fff;">GB3D3</div>
<div class="a" style="left:864.5px;top:98.5px;width:16.5px;height:16px;background:#d9d9d9"></div>
<svg class="a" style="left:800px;top:98px" width="150" height="20" viewBox="800 98 150 20" fill="none" stroke="#333" stroke-width="1">
<path d="M814 102.4 V109.8 H821 M812.2 104.2 H819.3 V111.3" stroke="#444" stroke-width="1.1"/>
<path d="M827.4 105.5 L829.2 107.3 L831 105.5" stroke-width="0.8"/>
<line x1="834.6" y1="100" x2="834.6" y2="114" stroke="#cfcfcf"/>
<path d="M842.7 111.5 Q839.2 111.4 839.6 108.4 Q840 106 842.3 104.3" stroke="#222" stroke-width="1"/><path d="M841 103.2 L844.4 103.1 L843.8 106.4Z" fill="#222" stroke="none"/>
<path d="M845 102.4 H847.5 Q849.9 102.6 849.4 105.5 Q848.9 108 846.5 109.8" stroke="#222" stroke-width="1"/><path d="M844.8 111.3 L848.2 111.1 L845.4 108.1Z" fill="#222" stroke="none"/>
<path d="M855.2 105.5 L857 107.3 L858.8 105.5" stroke-width="0.8"/>
<line x1="862.4" y1="100" x2="862.4" y2="114" stroke="#cfcfcf"/>
<path d="M868 104.8 L871 101.8 H878.1 V108.7 L875.1 111.7 H868Z M868 104.8 H875.1 V111.7 M875.1 104.8 L878.1 101.8" stroke="#222" stroke-width="0.9"/>
<path d="M871 101.8 V108.7 H878.1 M871 108.7 L868 111.7 M868 104.8 L875.1 111.7" stroke="#555" stroke-width="0.6"/>
<path d="M884.7 104.3 L887.5 101.8 H895 V109 L892.2 111.7 H884.7Z" fill="#111" stroke="#111" stroke-width="0.8"/>
<path d="M884.9 104.3 H892.2 V111.5 M892.2 104.3 L894.8 101.9" stroke="#fff" stroke-width="0.7"/>
<line x1="898.3" y1="100" x2="898.3" y2="114" stroke="#cfcfcf"/>
<path d="M902.8 105.8 L907.8 106.8 L913 103.8 L908 103 Z M902.8 105.8 V109.6 L907.8 111.2 V106.8 M913 103.8 V107 L907.8 111.2" stroke="#222" stroke-width="0.9"/>
<path d="M919.8 107 L924.5 102.6 L929.2 107 M920.9 106 V111.2 H928.1 V106 M923 111.2 V108.8 Q924.5 107.2 926 108.8 V111.2" stroke="#8a8a8a" stroke-width="0.9"/>
<path d="M936.6 102.3 L939.3 105 M941.3 105 L944 102.3 M936.6 111.6 L939.3 108.9 M941.3 108.9 L944 111.6" stroke="#333" stroke-width="0.9"/>
<path d="M936.3 102 H939 L936.3 104.7Z M944.3 102 H941.6 L944.3 104.7Z M936.3 111.9 H939 L936.3 109.2Z M944.3 111.9 H941.6 L944.3 109.2Z" fill="#222" stroke="none"/>
</svg>
<svg class="a" style="left:885px;top:112px" width="60" height="52" viewBox="885 112 60 52">
<ellipse cx="915.4" cy="145.4" rx="21.5" ry="10.5" fill="none" stroke="#dcdcdc" stroke-width="4"/>
<polygon points="912,117.5 931,121.5 929,139.4 919.6,151.3 901.1,144.5 898.9,125.3" fill="#a9a9a9"/>
<polyline points="898.9,125.3 920,129.2 931,121.5 M920,129.2" fill="none" stroke="#777" stroke-width="0.8"/>
<line x1="920" y1="129.2" x2="919.6" y2="151.3" stroke="#888" stroke-width="0.7"/>
<polyline points="912,117.5 911,138 901.1,144.5 M911,138 929,139.4" fill="none" stroke="#9a9a9a" stroke-width="0.5"/>
<polygon points="912,117.5 931,121.5 929,139.4 919.6,151.3 901.1,144.5 898.9,125.3" fill="none" stroke="#8a8a8a" stroke-width="0.7"/>
<path d="M900 137 L904 136 M940 151 L945 152 M903 159 L905 155 L909 154" stroke="#888" stroke-width="0.8"/>
</svg>
<svg class="a" style="left:15px;top:565px" width="50" height="42" viewBox="15 565 50 42">
<line x1="28.6" y1="594.9" x2="28.6" y2="580" stroke="#0000ff" stroke-width="1.8"/><polygon points="28.6,574.2 25.5,583 31.7,583" fill="#0000ff"/>
<line x1="28.6" y1="594.9" x2="35" y2="589" stroke="#007700" stroke-width="1.8"/><polygon points="40.7,584.4 32.5,588.2 36,592" fill="#008800"/>
<line x1="28.6" y1="594.9" x2="42" y2="598.5" stroke="#ff0000" stroke-width="1.8"/><polygon points="49.2,600.6 40,596 39,601.5" fill="#ff0000"/>
<circle cx="28.6" cy="594.9" r="2.3" fill="#666"/>
<text x="32.3" y="573.5" font-size="7" fill="#333" font-family="Liberation Sans" text-anchor="middle">Z</text>
<text x="43.5" y="581.5" font-size="7" fill="#333" font-family="Liberation Sans" text-anchor="middle">Y</text>
<text x="52.4" y="599.5" font-size="7" fill="#333" font-family="Liberation Sans" text-anchor="middle">X</text>
</svg>
<div class="a ft" style="left:11.5px">Design Code: <b>EN</b></div>
<div class="a ft" style="left:86.5px">Rounding: <b>Metric</b></div>
<div class="a ft" style="left:165px">Presentation Units: <b>Metric</b></div>
<div class="a ft" style="left:1120px;color:#f37021">www.<span style="color:#fff">ideastatica</span> .com</div>
<!--/VP-->

<div id="panel" class="a"></div>
<div class="a" style="left:950.5px;top:99px;width:3.3px;height:526px;background:#c9c9c9"></div>
<div class="a" style="left:953px;top:99px;width:247px;height:15px;background:#f37021"></div>
<div class="a" style="left:960px;top:101px;font-size:7.6px;font-weight:bold;color:#fff;line-height:11px">GB3D3</div>
<div class="a" style="left:1107px;top:101px;font-size:8px;font-weight:bold;color:#fff;line-height:11px">New</div>
<div class="a" style="left:1135.5px;top:101px;font-size:8px;font-weight:bold;color:#fff;line-height:11px">Copy</div>
<div class="a" style="left:1165px;top:101px;font-size:8px;font-weight:bold;color:#fff;line-height:11px">Delete</div>
<div class="a ph" style="left:961px;top:123px">ebar properties</div>
<div class="a pl" style="top:138.5px">iameter [mm]</div>
<div class="a inp" style="top:137px;height:12.5px;width:122px;background:#fff;color:#222;line-height:10.5px">10</div>
<svg class="a" style="left:1185px;top:138px" width="7" height="10"><path d="M1 4 L3.5 1.5 L6 4 M1 6 L3.5 8.5 L6 6" fill="none" stroke="#888" stroke-width="0.8"/></svg>
<div class="a pl" style="top:153.8px">laterial</div>
<div class="a inp" style="top:152px;height:12.5px;width:107px;background:#fff;color:#222;line-height:10.5px">B 500B</div>
<svg class="a" style="left:1168px;top:156.25px" width="6" height="4"><path d="M0.5 0.5 L3 3 L5.5 0.5" fill="none" stroke="#444" stroke-width="0.9"/></svg>
<svg class="a" style="left:1183px;top:153px" width="9" height="9"><path d="M4.5 1 V8 M1 4.5 H8" stroke="#333" stroke-width="1"/></svg>
<div class="a pl" style="top:168.9px">nchorage type at the beginning</div>
<div class="a pl" style="top:183.8px">nchorage type at the end</div>
<div class="a" style="left:1086px;top:167.10000000000002px;width:13px;height:12px;background:#d4d4d4"></div>
<svg class="a" style="left:1070px;top:166.3px" width="100" height="16" viewBox="1070 166.3 100 16" fill="none" stroke="#111" stroke-width="1.3"><path d="M1073.8 175.70000000000002 H1083.3"/><path d="M1087.8 171.3 V174.20000000000002 Q1087.8 175.70000000000002 1089.5 175.70000000000002 H1097.6"/><path d="M1106.3 171.10000000000002 L1102.4 175.10000000000002 Q1102 175.70000000000002 1103 175.70000000000002 H1110.8"/><path d="M1124.8 171.3 H1117.5 Q1115 171.3 1115 173.5 Q1115 175.70000000000002 1117.5 175.70000000000002 H1124.8"/><path d="M1128.8 175.70000000000002 H1138.8"/><path d="M1133.8 175.70000000000002 V173.3" stroke-width="1.6"/><path d="M1143.4 173.20000000000002 H1150" stroke-width="1.2"/><path d="M1147.5 171.60000000000002 L1150.5 173.20000000000002 L1147.5 174.8Z" fill="#111" stroke-width="0.8"/><path d="M1151 169.9 V177.10000000000002" stroke-width="1.7"/><path d="M1156.8 173.20000000000002 H1161" stroke-width="1.2"/><path d="M1161.3 170.3 V176.9" stroke-width="1.3"/><path d="M1161.3 170.3 H1165.8 V176.9 H1161.3" stroke-width="1" stroke="#777"/></svg>
<div class="a" style="left:1086px;top:181.60000000000002px;width:13px;height:12px;background:#d4d4d4"></div>
<svg class="a" style="left:1070px;top:180.8px" width="100" height="16" viewBox="1070 180.8 100 16" fill="none" stroke="#111" stroke-width="1.3"><path d="M1073.8 190.20000000000002 H1083.3"/><path d="M1087.8 185.8 V188.70000000000002 Q1087.8 190.20000000000002 1089.5 190.20000000000002 H1097.6"/><path d="M1106.3 185.60000000000002 L1102.4 189.60000000000002 Q1102 190.20000000000002 1103 190.20000000000002 H1110.8"/><path d="M1124.8 185.8 H1117.5 Q1115 185.8 1115 188.0 Q1115 190.20000000000002 1117.5 190.20000000000002 H1124.8"/><path d="M1128.8 190.20000000000002 H1138.8"/><path d="M1133.8 190.20000000000002 V187.8" stroke-width="1.6"/><path d="M1143.4 187.70000000000002 H1150" stroke-width="1.2"/><path d="M1147.5 186.10000000000002 L1150.5 187.70000000000002 L1147.5 189.3Z" fill="#111" stroke-width="0.8"/><path d="M1151 184.4 V191.60000000000002" stroke-width="1.7"/><path d="M1156.8 187.70000000000002 H1161" stroke-width="1.2"/><path d="M1161.3 184.8 V191.4" stroke-width="1.3"/><path d="M1161.3 184.8 H1165.8 V191.4 H1161.3" stroke-width="1" stroke="#777"/></svg>
<div class="a ph" style="left:961px;top:205.5px">hape definition</div>
<div class="a pl" style="top:220.5px">efinition of bar shape</div>
<div class="a inp" style="top:219.5px;height:11.5px;width:122px;background:#fff;color:#222;line-height:9.5px" ><span style="font-size:7.3px">On surface edge on more edges</span></div>
<svg class="a" style="left:1183px;top:223.25px" width="6" height="4"><path d="M0.5 0.5 L3 3 L5.5 0.5" fill="none" stroke="#444" stroke-width="0.9"/></svg>
<div class="a pl" style="top:235.5px">urface cover [mm]</div>
<div class="a inp" style="top:235.5px;height:11.5px;width:122px;background:#fff;color:#222;line-height:9.5px">100</div>
<div class="a pl" style="top:250.5px">umber of layers</div>
<div class="a inp" style="top:250px;height:11.5px;width:122px;background:#fff;color:#222;line-height:9.5px">3</div>
<div class="a pl" style="top:265.5px">istance of layers [mm]</div>
<div class="a inp" style="top:264.5px;height:12.0px;width:122px;background:#fff;color:#222;line-height:10.0px">200</div>
<div class="a ph" style="left:961px;top:288px">urface component data</div>
<div class="a pl" style="top:303px">laster</div>
<div class="a inp" style="top:302px;height:12.5px;width:122px;background:#fff;color:#222;line-height:10.5px">SB1</div>
<svg class="a" style="left:1183px;top:306.25px" width="6" height="4"><path d="M0.5 0.5 L3 3 L5.5 0.5" fill="none" stroke="#444" stroke-width="0.9"/></svg>
<div class="a pl" style="top:318.5px">urface</div>
<div class="a inp" style="top:317.5px;height:12.0px;width:122px;background:#fff;color:#222;line-height:10.0px">5</div>
<svg class="a" style="left:1183px;top:321.5px" width="6" height="4"><path d="M0.5 0.5 L3 3 L5.5 0.5" fill="none" stroke="#444" stroke-width="0.9"/></svg>
<div class="a pl" style="top:333.5px">dges</div>
<div class="a inp" style="top:333px;height:11.5px;width:122px;background:#fff;color:#222;line-height:9.5px">1 2 3 4</div>
<div class="a pl" style="top:348.5px">rst edge</div>
<div class="a" style="left:1072px;top:350px;width:7.5px;height:8px;border:1px solid #dcdcdc"></div>
<div class="a pl" style="top:363.5px">ast edge</div>
<div class="a" style="left:1072px;top:365px;width:7.5px;height:8px;border:1px solid #dcdcdc"></div>
<div class="a pl" style="top:378.5px">landrel diameter</div>
<div class="a inp" style="top:377.5px;height:12.0px;width:96px;background:#ececec;color:#aaa;line-height:10.0px">4,00</div>
<svg class="a" style="left:1171px;top:380px" width="24" height="10"><circle cx="3.5" cy="4" r="1.8" fill="none" stroke="#444" stroke-width="0.7"/><path d="M3.5 1.5 V6.5" stroke="#444" stroke-width="0.6"/><path d="M12 9 L12.5 6.5 L18.5 0.5 L20.5 2.5 L14.5 8.5 Z" fill="none" stroke="#333" stroke-width="1"/></svg>
<div class="a ph" style="left:961px;top:400.5px">hape position</div>
<div class="a pl" style="top:415.5px">dge cover type</div>
<div class="a inp" style="top:414.5px;height:12.0px;width:122px;background:#fff;color:#222;line-height:10.0px">From Settings</div>
<svg class="a" style="left:1183px;top:418.5px" width="6" height="4"><path d="M0.5 0.5 L3 3 L5.5 0.5" fill="none" stroke="#444" stroke-width="0.9"/></svg>
<div class="a" style="left:961px;top:442.5px;width:232px;height:6px;background:#e8e8e8"></div>
<div class="a" style="left:980px;top:442.5px;width:213px;height:6px;background:#cdcdcd"></div>
<div class="a" style="left:961px;top:457px;width:232px;height:1px;background:#e4e4e4"></div>
<!--DIAG-->
<svg class="a" style="left:955px;top:460px" width="245" height="164" viewBox="955 460 245 164" font-family="Liberation Sans">
<rect x="979.4" y="467.5" width="196.6" height="53.1" fill="none" stroke="#777" stroke-width="1.1"/>
<rect x="1004" y="519" width="10" height="3" fill="#fff"/>
<rect x="1152" y="519" width="9" height="3" fill="#fff"/>
<circle cx="979.4" cy="467.5" r="1.3" fill="#fff" stroke="#888" stroke-width="0.7"/>
<circle cx="1078.6" cy="467.5" r="1.3" fill="#fff" stroke="#888" stroke-width="0.7"/>
<circle cx="1176" cy="467.5" r="1.3" fill="#fff" stroke="#888" stroke-width="0.7"/>
<circle cx="979.4" cy="494.5" r="1.3" fill="#fff" stroke="#888" stroke-width="0.7"/>
<circle cx="1176" cy="494.5" r="1.3" fill="#fff" stroke="#888" stroke-width="0.7"/>
<circle cx="1078.6" cy="520.6" r="1.3" fill="#fff" stroke="#888" stroke-width="0.7"/>
<path d="M1078.6 492.5 L1080.6 494.5 L1078.6 496.5 L1076.6 494.5Z" fill="#fff" stroke="#888" stroke-width="0.7"/>
<circle cx="979.4" cy="520.6" r="1.6" fill="#f59a66"/><circle cx="1176" cy="520.6" r="1.6" fill="#f59a66"/>
<line x1="1018" y1="506.8" x2="1147.7" y2="486.4" stroke="#f59a66" stroke-width="1.8"/>
<path d="M1006.1 506.1 V520.6 M1003 506.1 H1014 M1003.5 504 L1008.5 509 M1003.5 518 L1008.5 523" stroke="#aaa" stroke-width="0.7" fill="none"/>
<path d="M979.4 535.8 H1016.6 M979.4 527 V538 M1016.6 527 V538 M977 538 L982 533.5 M1014 538 L1019 533.5" stroke="#aaa" stroke-width="0.7" fill="none"/>
<path d="M1157.6 486.4 V520.6 M1150.4 486.4 H1161 M1155 484 L1160 489 M1155 518 L1160 523" stroke="#aaa" stroke-width="0.7" fill="none"/>
<path d="M1146.4 535.8 H1176 M1146.4 527.5 V538 M1176 527.5 V538 M1144 538 L1149 533.5 M1173.5 538 L1178.5 533.5" stroke="#aaa" stroke-width="0.7" fill="none"/>
<text x="970" y="475.5" font-size="10.8" fill="#2a2a2a">4</text>
<text x="1081" y="478.4" font-size="10.8" fill="#2a2a2a">7</text>
<text x="1180.5" y="476.5" font-size="10.8" fill="#2a2a2a">3</text>
<text x="970" y="505.5" font-size="10.8" fill="#2a2a2a">8</text>
<text x="1081.5" y="503.5" font-size="10.8" fill="#2a2a2a">0=9</text>
<text x="1180.5" y="504.8" font-size="10.8" fill="#2a2a2a">6</text>
<text x="970.2" y="529.8" font-size="10.8" fill="#f59a66">1</text>
<text x="1080.6" y="531.8" font-size="10.8" fill="#2a2a2a">5</text>
<text x="1181" y="529.8" font-size="10.8" fill="#f59a66">2</text>
<text x="994.3" y="515.3" font-size="10.8" fill="#2a2a2a">Z</text>
<text x="1000.8" y="517" font-size="6.5" fill="#2a2a2a">1</text>
<text x="993.4" y="533.1" font-size="10.8" fill="#2a2a2a">X</text>
<text x="1000.3" y="535" font-size="6.5" fill="#2a2a2a">1</text>
<text x="1160" y="508" font-size="10.8" fill="#2a2a2a">Z</text>
<text x="1166" y="509.7" font-size="6.5" fill="#2a2a2a">2</text>
<text x="1157" y="533" font-size="10.8" fill="#2a2a2a">X</text>
<text x="1164" y="535" font-size="6.5" fill="#2a2a2a">2</text>
<text x="1131" y="543.7" font-size="10.8" fill="#2a2a2a">T</text>
<path d="M979.4 546.3 H1067.8 V569 L1064 575.5 L1071.5 573 L1067.8 578 V599.6 H979.4 Z" fill="none" stroke="#777" stroke-width="1.1"/>
<rect x="994" y="598" width="10" height="3" fill="#fff"/>
<circle cx="979.4" cy="546.3" r="1.3" fill="#fff" stroke="#888" stroke-width="0.7"/><circle cx="979.4" cy="573.5" r="1.3" fill="#fff" stroke="#888" stroke-width="0.7"/><circle cx="979.4" cy="599.6" r="1.6" fill="#f59a66"/>
<path d="M1012 587.7 H1057.5 V556.9" stroke="#f59a66" stroke-width="1.8" fill="none"/>
<path d="M995.6 587.2 V599.6 M992.5 587.2 H1003.5 M993 585 L998 590 M993 597 L998 602" stroke="#aaa" stroke-width="0.7" fill="none"/>
<path d="M979.4 614.4 H1011.4 M979.4 605.5 V616.5 M1011.4 605.5 V616.5 M977 617 L982 612 M1009 617 L1014 612" stroke="#aaa" stroke-width="0.7" fill="none"/>
<text x="970" y="556.9" font-size="10.8" fill="#2a2a2a">4</text>
<text x="970" y="584.8" font-size="10.8" fill="#2a2a2a">8</text>
<text x="970.2" y="609.2" font-size="10.8" fill="#f59a66">1</text>
<text x="981.8" y="596.3" font-size="10.8" fill="#2a2a2a">Z</text>
<text x="988.8" y="598" font-size="6.5" fill="#2a2a2a">1</text>
<text x="990.7" y="611.1" font-size="10.8" fill="#2a2a2a">X</text>
<text x="997.6" y="613" font-size="6.5" fill="#2a2a2a">1</text>
<path d="M1088.2 546.3 H1176.2 V599.6 H1088.2 V578 L1084 575 L1092 573 L1088.2 568 Z" fill="none" stroke="#777" stroke-width="1.1"/>
<rect x="1145" y="598" width="8" height="3" fill="#fff"/>
<line x1="1088.2" y1="586.8" x2="1162.6" y2="586.8" stroke="#f59a66" stroke-width="1.8"/>
<path d="M1149.4 586.8 V599.6 M1146 585 L1151 590 M1146 597 L1151 602 M1142 586.8 H1157" stroke="#aaa" stroke-width="0.7" fill="none"/>
<path d="M1148.8 614 H1176 M1162 605.5 V616 M1176 605.5 V616 M1159.5 616.5 L1164.5 611.5 M1173.5 616.5 L1178.5 611.5" stroke="#aaa" stroke-width="0.7" fill="none"/>
<path d="M1121.8 603.2 H1142 M1138 601 L1144.2 603.2 L1138 605.4Z" stroke="#f59a66" stroke-width="0.9" fill="#f59a66"/>
<text x="1181" y="577.5" font-size="10.8" fill="#2a2a2a">R</text>
<text x="1140" y="595.3" font-size="10.8" fill="#2a2a2a">c</text>
<text x="1130" y="615.1" font-size="10.8" fill="#f59a66">B</text>
<text x="1151.2" y="611.1" font-size="10.8" fill="#2a2a2a">c</text>
</svg>
<!--/DIAG-->
<div class="a red" style="left:1130px;top:92px;width:30.5px;height:30.5px"></div>
<div class="a rn" style="left:1119px;top:117px">1</div>
<div class="a red" style="left:1066px;top:233px;width:131.5px;height:51px"></div>
<div class="a rn" style="left:1051px;top:250.5px">2</div>
<div class="a red" style="left:1068.5px;top:315.5px;width:129.5px;height:18px"></div>
<div class="a rn" style="left:1053px;top:316px">3</div>

</body></html>
